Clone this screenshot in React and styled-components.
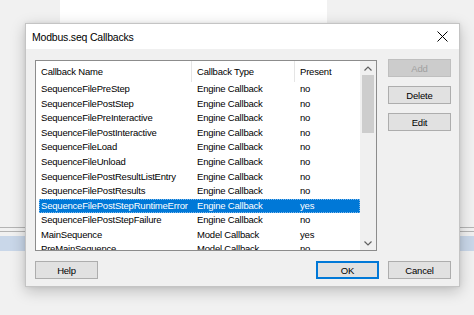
import React from "react";
import styled, { createGlobalStyle, css } from "styled-components";

const FONT = '"Liberation Sans", Arial, sans-serif';

const Global = createGlobalStyle`
  html, body { margin: 0; padding: 0; background: #f0f0f0; }
  body { font-family: ${FONT}; font-size: 9.5px; letter-spacing: -0.2px; color: #000; overflow: hidden; }
  * { box-sizing: border-box; }
`;

const Desktop = styled.div`
  position: relative;
  width: 474px;
  height: 315px;
  background: #f1f1f1;
  display: flex;
  flex-direction: column;
  overflow: hidden;
`;

const TopArea = styled.div`
  height: 227px;
  display: flex;
  align-items: flex-start;
  padding-left: 60px;
`;

const WhitePanel = styled.div`
  width: 267px;
  height: 24px;
  background: #ffffff;
`;

const Rule = styled.div`
  height: 1px;
  background: #b4b4b4;
  margin-bottom: ${(p) => p.$after}px;
`;

const Band = styled.div`
  height: 15px;
  background: #c9d7e9;
`;

const Dialog = styled.div`
  position: absolute;
  left: 25px;
  top: 23px;
  width: 435px;
  height: 264px;
  background: #f0f0f0;
  border: 1px solid #c4c4c4;
  box-shadow: 0 4px 14px rgba(0, 0, 0, 0.22), 0 0 4px rgba(0, 0, 0, 0.08);
  display: flex;
  flex-direction: column;
`;

const TitleBar = styled.div`
  height: 25px;
  background: #ffffff;
  display: flex;
  align-items: center;
  justify-content: space-between;
  padding: 0 11px 0 6px;
  font-size: 10.5px;
`;

const Body = styled.div`
  flex: 1;
  display: flex;
  flex-direction: column;
  padding: 11px 8px 7px 9px;
  gap: 10px;
`;

const TopRow = styled.div`
  display: flex;
  gap: 11px;
`;

const ListBox = styled.div`
  width: 342px;
  height: 191px;
  border: 1px solid #8c8c8c;
  background: #ffffff;
  display: flex;
  overflow: hidden;
`;

const ListContent = styled.div`
  flex: 1;
  overflow: hidden;
`;

const Header = styled.div`
  height: 21.3px;
  display: grid;
  grid-template-columns: 156px 103px 1fr;
`;

const HeaderCell = styled.div`
  display: flex;
  align-items: center;
  padding-left: 5px;
  border-right: ${(p) => (p.$last ? "none" : "1px solid #e5e5e5")};
`;

const Row = styled.div`
  height: 14.55px;
  line-height: 14.55px;
  margin-left: 3px;
  display: grid;
  grid-template-columns: 153px 103px 1fr;
  white-space: nowrap;
  ${(p) =>
    p.$selected &&
    css`
      background: #0078d7;
      color: #ffffff;
      outline: 1px dotted #7fb8ea;
      outline-offset: -1px;
    `}
`;

const Cell = styled.div`
  padding-left: ${(p) => (p.$first ? 2 : 5)}px;
  overflow: hidden;
`;

const ScrollBar = styled.div`
  width: 16px;
  background: #f0f0f0;
  display: flex;
  flex-direction: column;
  align-items: center;
`;

const ArrowBox = styled.div`
  height: 14px;
  width: 100%;
  display: flex;
  align-items: center;
  justify-content: center;
`;

const Track = styled.div`
  flex: 1;
  width: 100%;
  padding: 0 2px;
`;

const Thumb = styled.div`
  height: 58px;
  background: #cdcdcd;
`;

const ButtonColumn = styled.div`
  display: flex;
  flex-direction: column;
  gap: 9px;
  margin-top: -1px;
`;

const Button = styled.button`
  width: 63px;
  height: 18px;
  padding: 0;
  font-family: ${FONT};
  font-size: 9.5px;
  letter-spacing: -0.2px;
  color: #000;
  background: #e1e1e1;
  border: 1px solid #adadad;
  display: flex;
  align-items: center;
  justify-content: center;
  ${(p) =>
    p.$disabled &&
    css`
      background: #cccccc;
      border-color: #bfbfbf;
      color: #a0a0a0;
    `}
  ${(p) =>
    p.$default &&
    css`
      border-color: #0078d7;
      box-shadow: inset 0 0 0 1px #0078d7;
    `}
`;

const BottomRow = styled.div`
  display: flex;
  justify-content: space-between;
`;

const ButtonGroup = styled.div`
  display: flex;
  gap: 9px;
`;

const Chevron = ({ up }) => (
  <svg width="8" height="5" viewBox="0 0 8 5">
    <path
      d={up ? "M0.5 4.5 L4 1 L7.5 4.5" : "M0.5 0.5 L4 4 L7.5 0.5"}
      fill="none"
      stroke="#606060"
      strokeWidth="1.2"
    />
  </svg>
);

const CloseIcon = () => (
  <svg width="11" height="11" viewBox="0 0 11 11">
    <path d="M0.5 0.5 L10.5 10.5 M10.5 0.5 L0.5 10.5" stroke="#000" strokeWidth="1" />
  </svg>
);

const rows = [
  ["SequenceFilePreStep", "Engine Callback", "no"],
  ["SequenceFilePostStep", "Engine Callback", "no"],
  ["SequenceFilePreInteractive", "Engine Callback", "no"],
  ["SequenceFilePostInteractive", "Engine Callback", "no"],
  ["SequenceFileLoad", "Engine Callback", "no"],
  ["SequenceFileUnload", "Engine Callback", "no"],
  ["SequenceFilePostResultListEntry", "Engine Callback", "no"],
  ["SequenceFilePostResults", "Engine Callback", "no"],
  ["SequenceFilePostStepRuntimeError", "Engine Callback", "yes"],
  ["SequenceFilePostStepFailure", "Engine Callback", "no"],
  ["MainSequence", "Model Callback", "yes"],
  ["PreMainSequence", "Model Callback", "no"],
];

export default function App() {
  return (
    <>
      <Global />
      <Desktop>
        <TopArea>
          <WhitePanel />
        </TopArea>
        <Rule $after={3} />
        <Rule $after={4} />
        <Band />

        <Dialog>
          <TitleBar>
            <span>Modbus.seq Callbacks</span>
            <CloseIcon />
          </TitleBar>
          <Body>
            <TopRow>
              <ListBox>
                <ListContent>
                  <Header>
                    <HeaderCell>Callback Name</HeaderCell>
                    <HeaderCell>Callback Type</HeaderCell>
                    <HeaderCell $last>Present</HeaderCell>
                  </Header>
                  {rows.map((r, i) => (
                    <Row key={r[0]} $selected={i === 8}>
                      <Cell $first>{r[0]}</Cell>
                      <Cell>{r[1]}</Cell>
                      <Cell>{r[2]}</Cell>
                    </Row>
                  ))}
                </ListContent>
                <ScrollBar>
                  <ArrowBox>
                    <Chevron up />
                  </ArrowBox>
                  <Track>
                    <Thumb />
                  </Track>
                  <ArrowBox>
                    <Chevron />
                  </ArrowBox>
                </ScrollBar>
              </ListBox>
              <ButtonColumn>
                <Button $disabled>Add</Button>
                <Button>Delete</Button>
                <Button>Edit</Button>
              </ButtonColumn>
            </TopRow>
            <BottomRow>
              <Button>Help</Button>
              <ButtonGroup>
                <Button $default>OK</Button>
                <Button>Cancel</Button>
              </ButtonGroup>
            </BottomRow>
          </Body>
        </Dialog>
      </Desktop>
    </>
  );
}
